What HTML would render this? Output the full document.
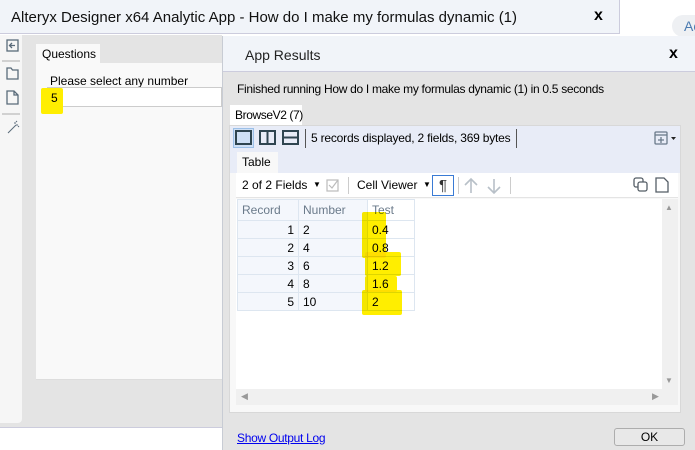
<!DOCTYPE html>
<html><head><style>
*{margin:0;padding:0;box-sizing:border-box}
body{width:695px;height:450px;overflow:hidden;position:relative;background:#fff;font-family:"Liberation Sans",sans-serif;font-size:12px;color:#000}
.a{position:absolute}
.hl{position:absolute;background:#ffee00;border-radius:2px}
.m{mix-blend-mode:multiply}
table{border-collapse:collapse;font-size:12px}
td{border:1px solid #dde6f0;height:18px;padding:0 4px;background:#f4f7fc;white-space:nowrap}
td.t{background:#fff}
</style></head><body>
<!-- title bar -->
<div class="a" style="left:0;top:0;width:620px;height:34px;background:#f1f4f9;border-bottom:1px solid #ccd;border-right:1px solid #ccd"></div>
<div class="a" style="left:11px;top:9px;font-size:15px;color:#111">Alteryx Designer x64 Analytic App - How do I make my formulas dynamic (1)</div>
<div class="a" style="left:594px;top:7px;font-size:16px;font-weight:bold">x</div>
<div class="a" style="left:672px;top:15px;width:40px;height:22px;background:#eef0f3;border-radius:11px 0 0 11px;color:#4a7ab0;font-size:14px;padding:3px 0 0 12px">Ac</div>
<!-- left region -->
<div class="a" style="left:0;top:35px;width:222px;height:393px;background:#e4e4e4;border-bottom:1px solid #ccd"></div>
<div class="a" style="left:0;top:35px;width:22px;height:388px;background:#f6f6f6;border-radius:0 0 4px 0"></div>
<svg class="a" style="left:0;top:35px" width="22" height="100" viewBox="0 0 22 100" fill="none" stroke="#5a6b7a" stroke-width="1.3">
<rect x="7" y="5" width="11" height="11"/><path d="M15 10.5H10M12 8l-2.5 2.5L12 13"/>
<line x1="2" y1="26" x2="20" y2="26" stroke="#bbb"/>
<path d="M7 33h4l1.5 2H18v9H7z"/>
<path d="M7 56h7l4 4v9H7zM14 56v4h4"/>
<line x1="2" y1="79" x2="20" y2="79" stroke="#bbb"/>
<path d="M8 98l8-8M15 87v2M18 90h-2M17 86l-1 1M19 92l-1-1" stroke-width="1"/>
</svg>
<div class="a" style="left:36px;top:44px;width:64px;height:19px;background:#f9f9f9;padding:3px 0 0 6px">Questions</div>
<div class="a" style="left:36px;top:63px;width:186px;height:317px;background:#f9f9f9;border-bottom:1px solid #ddd"></div>
<div class="a" style="left:50px;top:74px;font-size:12px">Please select any number</div>
<div class="a" style="left:47px;top:87px;width:175px;height:20px;background:#fff;border:1px solid #ccc"></div>
<div class="hl" style="left:41px;top:88px;width:22px;height:26px"></div>
<div class="a" style="left:51px;top:91px">5</div>
<!-- dialog -->
<div class="a" style="left:222px;top:36px;width:473px;height:414px;background:#e4e4e4;border-left:1px solid #c8ccd4"></div>
<div class="a" style="left:223px;top:36px;width:472px;height:36px;background:#f1f4f9;border-bottom:1px solid #ccd"></div>
<div class="a" style="left:245px;top:47px;font-size:14px;color:#222">App Results</div>
<div class="a" style="left:669px;top:45px;font-size:16px;font-weight:bold">x</div>
<div class="a" style="left:237px;top:82px;font-size:12px;letter-spacing:-0.3px">Finished running How do I make my formulas dynamic (1) in 0.5 seconds</div>
<div class="a" style="left:230px;top:105px;width:72px;height:20px;background:#fff;padding:3px 0 0 5px;letter-spacing:-0.4px;white-space:nowrap">BrowseV2 (7)</div>
<div class="a" style="left:229px;top:125px;width:452px;height:288px;background:#f8f8f8;border:1px solid #d8d8d8"></div>
<div class="a" style="left:230px;top:126px;width:450px;height:25px;background:#e8ecf7"></div>
<svg class="a" style="left:233px;top:128px" width="70" height="20" viewBox="0 0 70 20" fill="none" stroke="#2f4550" stroke-width="2">
<rect x="0.5" y="0.5" width="20" height="19" fill="#cfe0f5" stroke="#9cc0e8" stroke-width="1"/>
<rect x="3" y="3" width="15" height="13"/>
<rect x="27" y="3" width="15" height="13"/><line x1="34.5" y1="3" x2="34.5" y2="16"/>
<rect x="50" y="3" width="15" height="13"/><line x1="50" y1="9.5" x2="65" y2="9.5"/>
</svg>
<div class="a" style="left:305px;top:129px;width:1px;height:19px;background:#555"></div>
<div class="a" style="left:311px;top:131px;letter-spacing:-0.2px">5 records displayed, 2 fields, 369 bytes</div>
<div class="a" style="left:516px;top:129px;width:1px;height:19px;background:#555"></div>
<svg class="a" style="left:653px;top:130px" width="26" height="16" viewBox="0 0 26 16" fill="none" stroke="#6a7a8a" stroke-width="1.3"><rect x="2" y="2" width="12" height="12" rx="1"/><line x1="2" y1="5" x2="14" y2="5"/><path d="M8 7v6M5 10h6"/><path d="M18 7h5l-2.5 3z" fill="#222" stroke="none"/></svg>
<div class="a" style="left:230px;top:151px;width:450px;height:22px;background:#e8ecf7"></div>
<div class="a" style="left:237px;top:152px;width:41px;height:21px;background:#f8f8f8;padding:3px 0 0 5px">Table</div>
<div class="a" style="left:236px;top:173px;width:442px;height:25px;background:#fff;border-bottom:1px solid #e4e4e4"></div>
<div class="a" style="left:242px;top:178px">2 of 2 Fields</div>
<div class="a" style="left:313px;top:180px;font-size:8px">▼</div>
<svg class="a" style="left:326px;top:178px" width="14" height="14" fill="none" stroke="#bbb" stroke-width="1.2"><rect x="1" y="2" width="11" height="11"/><path d="M3 7l3 3 6-8"/></svg>
<div class="a" style="left:348px;top:177px;width:1px;height:17px;background:#ccc"></div>
<div class="a" style="left:357px;top:178px">Cell Viewer</div>
<div class="a" style="left:423px;top:180px;font-size:8px">▼</div>
<div class="a" style="left:432px;top:175px;width:22px;height:21px;border:1px solid #3a7bd5;font-size:15px;text-align:center;line-height:19px;color:#333">¶</div>
<div class="a" style="left:458px;top:177px;width:1px;height:17px;background:#ccc"></div>
<svg class="a" style="left:462px;top:176px" width="50" height="20" fill="none" stroke="#b8c0c8" stroke-width="1.6"><path d="M9 17V3M3 9l6-6 6 6M32 3v14M26 11l6 6 6-6"/></svg>
<div class="a" style="left:510px;top:177px;width:1px;height:17px;background:#ccc"></div>
<svg class="a" style="left:632px;top:176px" width="42" height="18" fill="none" stroke="#555e66" stroke-width="1.3"><rect x="2" y="2" width="9" height="9" rx="2"/><rect x="6" y="6" width="9" height="9" rx="2" fill="#fff"/><path d="M24 2h8l4 4v10H24z"/></svg>
<!-- grid -->
<div class="a" style="left:236px;top:199px;width:426px;height:190px;background:#fff"></div>
<div class="a" style="left:662px;top:199px;width:16px;height:190px;background:#f0f0f0"></div>
<div class="a" style="left:665px;top:203px;font-size:8px;color:#999">▲</div>
<div class="a" style="left:665px;top:376px;font-size:8px;color:#999">▼</div>
<div class="a" style="left:236px;top:389px;width:442px;height:16px;background:#f0f0f0"></div>
<div class="a" style="left:241px;top:391px;font-size:9px;color:#999">◀</div>
<div class="a" style="left:652px;top:391px;font-size:9px;color:#999">▶</div>
<table class="a" style="left:237px;top:199px">
<tr style="color:#6a7a8a"><td style="width:61px;height:21px">Record</td><td style="width:69px;height:21px">Number</td><td class="t" style="width:47px;height:21px">Test</td></tr>
<tr><td style="text-align:right">1</td><td>2</td><td class="t">0.4</td></tr>
<tr><td style="text-align:right">2</td><td>4</td><td class="t">0.8</td></tr>
<tr><td style="text-align:right">3</td><td>6</td><td class="t">1.2</td></tr>
<tr><td style="text-align:right">4</td><td>8</td><td class="t">1.6</td></tr>
<tr><td style="text-align:right">5</td><td>10</td><td class="t">2</td></tr>
</table>
<div class="hl m" style="left:362px;top:212px;width:24px;height:46px"></div>
<div class="hl m" style="left:365px;top:252px;width:36px;height:24px"></div>
<div class="hl m" style="left:365px;top:276px;width:32px;height:16px"></div>
<div class="hl m" style="left:362px;top:290px;width:40px;height:25px"></div>
<!-- bottom -->
<div class="a" style="left:237px;top:431px;color:#0000ee;text-decoration:underline;letter-spacing:-0.3px">Show Output Log</div>
<div class="a" style="left:614px;top:428px;width:71px;height:18px;background:#e8e8e8;border:1px solid #adadad;border-radius:3px;text-align:center;line-height:16px">OK</div>
</body></html>
